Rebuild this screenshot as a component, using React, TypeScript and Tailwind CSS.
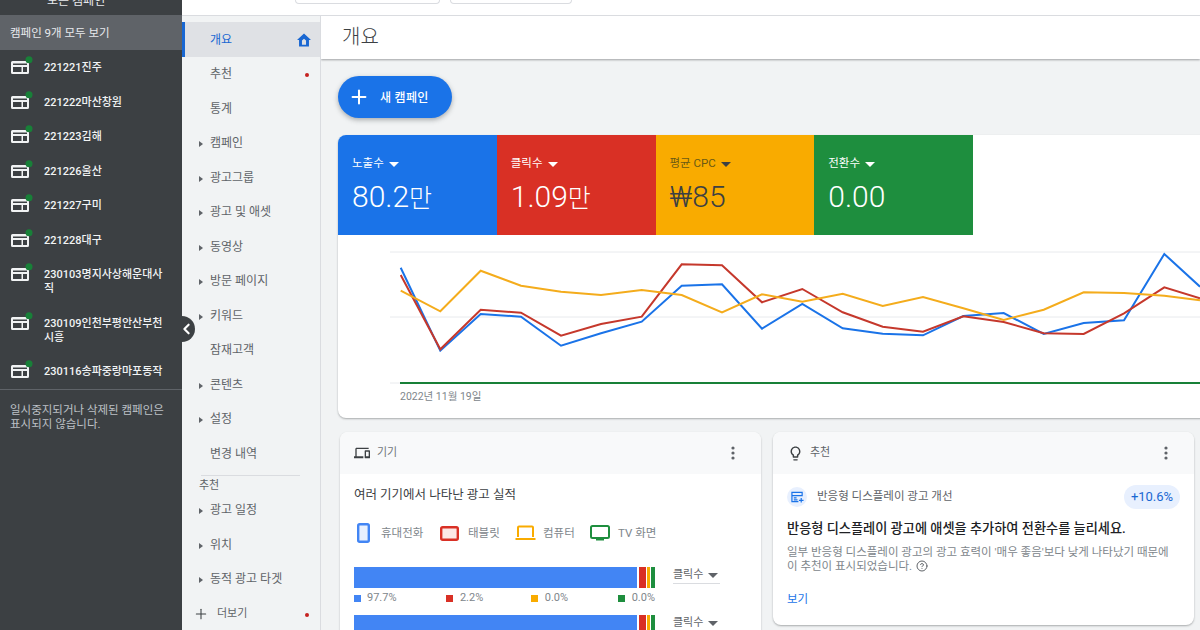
import { ChevronLeft, CircleHelp, Plus } from "lucide-react";

const campaigns = [
    "221221진주",
    "221222마산창원",
    "221223김해",
    "221226울산",
    "221227구미",
    "221228대구",
    "230103명지사상해운대사직",
    "230109인천부평안산부천시흥",
    "230116송파중랑마포동작",
];

const navTop = [
    { label: "추천", dot: true },
    { label: "통계" },
    { label: "캠페인", arrow: true },
    { label: "광고그룹", arrow: true },
    { label: "광고 및 애셋", arrow: true },
    { label: "동영상", arrow: true },
    { label: "방문 페이지", arrow: true },
    { label: "키워드", arrow: true },
    { label: "잠재고객" },
    { label: "콘텐츠", arrow: true },
    { label: "설정", arrow: true },
    { label: "변경 내역" },
];

const navBottom = [
    { label: "광고 일정", arrow: true },
    { label: "위치", arrow: true },
    { label: "동적 광고 타겟", arrow: true },
];

const blueLine = "400.7,267.7 440.3,350.7 480.7,314 521,316.7 561,345.7 601,333.3 641.7,321.7 681.7,285.7 722,284.3 762,328.7 802.3,304 842.7,328.3 882.7,333.7 923,335.3 963.3,316 1003.7,313 1043.7,334 1083.7,323 1124,320.3 1164.3,254 1200,286.7";
const redLine = "400.7,275 440.3,349.3 480.7,309.7 521,312.7 561,335.7 601,324 641.7,316.7 681.7,264.3 722,265.3 762,302.3 802.3,289 842.7,312.3 882.7,326.7 923,331.7 963.3,316.3 1003.7,322 1043.7,333.3 1083.7,334 1124,313.3 1164.3,287.3 1200,298.3";
const yellowLine = "400.7,290.7 440.3,311.3 480.7,270.7 521,285.7 561,291.7 601,295 641.7,290 681.7,295 722,312.3 762,294.3 802.3,301.7 842.7,293.7 882.7,306 923,297 963.3,308.3 1003.7,320 1043.7,309.7 1083.7,292.3 1124,293 1164.3,295.7 1200,300.3";

/* ----------------------------- icons ----------------------------- */
function CampaignIcon() {
    return (
        <svg width="24" height="20" viewBox="0 0 24 20" className="shrink-0">
            <path fill="#f1f3f4" fillRule="evenodd" d="M2.500 5h15A1.500 1.500 0 0 1 19 6.500v10a1.500 1.500 0 0 1-1.500 1.500h-15A1.500 1.500 0 0 1 1 16.500v-10A1.500 1.500 0 0 1 2.500 5zM3 7.500v1.500h14V7.500zm0 3.500v5h8.500v-5zm10 0v5h4v-5z" />
            <circle cx="19" cy="3.800" r="3.500" fill="#188038" />
        </svg>
    );
}

function Dots() {
    return (
        <svg width="4" height="14" viewBox="0 0 4 14">
            <circle cx="2" cy="2" r="1.600" fill="#5f6368" />
            <circle cx="2" cy="7" r="1.600" fill="#5f6368" />
            <circle cx="2" cy="12" r="1.600" fill="#5f6368" />
        </svg>
    );
}

function Caret({ color }: { color: string }) {
    return (
        <svg width="10" height="5" viewBox="0 0 10 5" className="ml-[5px]">
            <path d="M0 0h10L5 5z" fill={color} />
        </svg>
    );
}

function NavItem({ label, arrow, dot }: { label: string; arrow?: boolean; dot?: boolean }) {
    return (
        <div className="h-[34.5px] flex items-center relative pl-[28px] text-[12px] text-[#5f6368]">
            {arrow && (
                <svg width="4" height="6" viewBox="0 0 4 6" className="absolute left-[17px] top-[15px]">
                    <path d="M0 0l4 3-4 3z" fill="#5f6368" />
                </svg>
            )}
            {label}
            {dot && <span className="absolute left-[123px] top-[16px] w-1 h-1 rounded-full bg-[#c5221f]" />}
        </div>
    );
}

function Kpi({ label, value, unit, bg, dark }: { label: string; value: string; unit?: string; bg: string; dark?: boolean }) {
    return (
        <div className={`w-[158.75px] h-[100px] pl-[14px] pt-[22px] ${bg} ${dark ? "text-[#6b5a14]" : "text-white"}`}>
            <div className="flex items-center text-[11.5px] h-[14px]">
                {label}
                <Caret color={dark ? "#3c4043" : "#ffffff"} />
            </div>
            <div className={`mt-[10px] text-[30px] leading-[32px] font-light ${dark ? "text-[#3c4043]" : "text-white"}`}>
                {value}
                {unit && <span className="text-[25px]">{unit}</span>}
            </div>
        </div>
    );
}

function Square({ color }: { color: string }) {
    return <span className={`w-[7px] h-[7px] ${color}`} />;
}

function BarRow({ showLabels }: { showLabels?: boolean }) {
    return (
        <div className="flex">
            <div className="w-[301px]">
                <div className="h-[21px] flex">
                    <div className="w-[283px] bg-[#4285f4]" />
                    <div className="w-[1.5px] bg-white" />
                    <div className="w-[7.5px] bg-[#d93025]" />
                    <div className="w-[1px] bg-white" />
                    <div className="w-[3px] bg-[#f9ab00]" />
                    <div className="w-[1px] bg-white" />
                    <div className="w-[4px] bg-[#1e8e3e]" />
                </div>
                {showLabels && (
                    <div className="flex h-[20px] items-center text-[11px] text-[#80868b]">
                        <div className="w-[92px] flex items-center gap-[6px]"><Square color="bg-[#4285f4]" />97.7%</div>
                        <div className="w-[85px] flex items-center gap-[7px]"><Square color="bg-[#d93025]" />2.2%</div>
                        <div className="w-[87px] flex items-center gap-[7px]"><Square color="bg-[#f9ab00]" />0.0%</div>
                        <div className="flex items-center gap-[7px]"><Square color="bg-[#1e8e3e]" />0.0%</div>
                    </div>
                )}
            </div>
            <div className="ml-[18px] w-[47px] h-[16px] mt-[1px] flex items-center border-b border-[#dadce0] text-[11px] text-[#5f6368]">
                클릭수
                <Caret color="#5f6368" />
            </div>
        </div>
    );
}

/* --------------------------- component --------------------------- */
export default function App() {
    return (
        <div className="relative w-[1200px] h-[630px] overflow-hidden flex bg-[#f1f3f4] font-['Roboto','Noto_Sans_CJK_KR',sans-serif]">
            {/* CAMPAIGN LIST */}
            <aside className="w-[182px] shrink-0 bg-[#3c4043] text-white">
                <div className="h-[15px] overflow-hidden pl-[47px] text-[12px] leading-[3px] text-[#e8eaed]">모든 캠페인</div>
                <div className="h-[35px] flex items-center pl-[10px] pt-[2px] bg-[#5f6368] text-[11.5px] text-[#e8eaed]">캠페인 9개 모두 보기</div>
                {campaigns.map((name) => (
                    <div key={name} className="flex items-start pl-[10px] pr-[10px] pt-[11.25px] pb-[9.25px]">
                        <div className="w-[34px] h-[14px] shrink-0 -mt-[5px]"><CampaignIcon /></div>
                        <div className="text-[11px] leading-[14px] font-medium break-all text-[#f1f3f4]">{name}</div>
                    </div>
                ))}
                <div className="border-t border-[#5f6368] px-[10px] pt-[13px] text-[11.5px] leading-[14px] break-keep text-[#bdc1c6]">
                    일시중지되거나 삭제된 캠페인은 표시되지 않습니다.
                </div>
            </aside>

            {/* COLLAPSE HANDLE */}
            <div className="absolute left-[182px] top-[316px] w-[13px] h-[26px] rounded-r-full bg-[#3c4043] flex items-center">
                <ChevronLeft size={18} color="#ffffff" strokeWidth={3} className="-ml-[4px]" />
            </div>

            <div className="flex-1 min-w-0 flex flex-col">
                {/* TOP BAR */}
                <div className="h-[16px] shrink-0 bg-white border-b border-[#dadce0] flex items-start pl-[113px] gap-[10px]">
                    <div className="w-[145px] h-[4px] border border-t-0 border-[#dadce0] rounded-b-xl" />
                    <div className="w-[122px] h-[4px] border border-t-0 border-[#dadce0] rounded-b-xl" />
                </div>

                <div className="flex-1 min-h-0 flex">
                    {/* NAV */}
                    <nav className="w-[139px] shrink-0 border-r border-[#dadce0] pt-[6px]">
                        <div className="h-[35px] flex items-center relative pl-[25px] border-l-[3px] border-[#1967d2] bg-[#dfe1e5] text-[12px] text-[#1967d2]">
                            개요
                            <svg width="14" height="14" viewBox="0 0 24 24" className="absolute left-[112px] top-[11px]">
                                <path fill="#1967d2" fillRule="evenodd" d="M12 1L0 12h3.500v11h17V12H24zM8.500 20v-7L12 10l3.500 3v7z" />
                            </svg>
                        </div>
                        {navTop.map((item) => (
                            <NavItem key={item.label} {...item} />
                        ))}
                        <div className="ml-[19px] w-[99px] mt-[4px] border-t border-[#dadce0]" />
                        <div className="h-[17px] pl-[17px] pt-[3px] flex items-center text-[11px] text-[#5f6368]">추천</div>
                        {navBottom.map((item) => (
                            <NavItem key={item.label} {...item} />
                        ))}
                        <div className="h-[34.5px] flex items-center relative pl-[11px] text-[11px] text-[#5f6368]">
                            <Plus size={16} color="#3c4043" strokeWidth={1.6} className="mr-[8px]" />
                            더보기
                            <span className="absolute left-[123px] top-[16px] w-1 h-1 rounded-full bg-[#c5221f]" />
                        </div>
                    </nav>

                    {/* MAIN */}
                    <main className="flex-1 min-w-0 overflow-hidden">
                        <div className="h-[43px] bg-white shadow-[0_1px_2px_rgba(60,64,67,0.45)] flex items-center pl-[21px] pb-[2px] text-[20px] text-[#3c4043] font-light">
                            개요
                        </div>

                        <button className="mt-[17px] ml-[17px] w-[114px] h-[42px] rounded-full bg-[#1a73e8] shadow-[0_2px_5px_rgba(60,64,67,0.4)] flex items-center pl-[10px] text-[12px] font-medium tracking-[0.3px] text-white">
                            <Plus size={22} color="#ffffff" strokeWidth={2.2} />
                            <span className="ml-[10px] pt-[2px]">새 캠페인</span>
                        </button>

                        <section className="mt-[17px] ml-[17px] w-[890px] h-[283px] bg-white rounded-l-lg overflow-hidden shadow-[0_1px_2px_rgba(60,64,67,0.4)]">
                            <div className="flex">
                                <Kpi label="노출수" value="80.2" unit="만" bg="bg-[#1a73e8]" />
                                <Kpi label="클릭수" value="1.09" unit="만" bg="bg-[#d93025]" />
                                <Kpi label="평균 CPC" value="₩85" bg="bg-[#f9ab00]" dark />
                                <Kpi label="전환수" value="0.00" bg="bg-[#1e8e3e]" />
                            </div>
                            <svg width="862" height="150" viewBox="338 235 862 150" className="block" fill="none">
                                <path d="M390 252H1200M390 317H1200M390 383H1200" stroke="#e8eaed" strokeWidth="1" />
                                <polyline points={blueLine} stroke="#1a73e8" strokeWidth="2" />
                                <polyline points={redLine} stroke="#c5382c" strokeWidth="2" />
                                <polyline points={yellowLine} stroke="#f4ac1c" strokeWidth="2" />
                                <path d="M400 383H1200" stroke="#188038" strokeWidth="2" />
                            </svg>
                            <div className="pl-[62px] pt-[5px] text-[10.5px] leading-[14px] text-[#80868b]">2022년 11월 19일</div>
                        </section>

                        <div className="mt-[14px] ml-[19px] flex gap-[12px] items-start">
                            {/* DEVICES */}
                            <section className="w-[421px] h-[240px] shrink-0 bg-white rounded-lg overflow-hidden shadow-[0_1px_2px_rgba(60,64,67,0.35)]">
                                <div className="h-[42px] bg-[#f8f9fa] flex items-center pl-[14px] pr-[26px] text-[11px] text-[#70757a]">
                                    <svg width="16" height="16" viewBox="0 0 24 24" fill="#3c4043" className="mr-[7px]">
                                        <path d="M4 6h18V4H4c-1.100 0-2 .9-2 2v11H0v3h14v-3H4V6zm19 2h-6c-.55 0-1 .45-1 1v10c0 .55.45 1 1 1h6c.55 0 1-.45 1-1V9c0-.55-.45-1-1-1zm-1 9h-4v-7h4v7z" />
                                    </svg>
                                    기기
                                    <span className="ml-auto flex"><Dots /></span>
                                </div>
                                <div className="pl-[14px]">
                                    <div className="pt-[13px] text-[12.5px] leading-[16px] text-[#3c4043]">여러 기기에서 나타난 광고 실적</div>
                                    <div className="mt-[20px] h-[20px] flex items-center text-[11.5px] text-[#80868b]">
                                        <svg width="13" height="20" viewBox="0 0 13 20" fill="none" className="ml-[3px] mr-[11px]">
                                            <rect x="1.200" y="1.200" width="10.600" height="17.600" rx="1.500" fill="#e8f0fe" stroke="#4285f4" strokeWidth="2.400" />
                                        </svg>
                                        <span className="w-[59px] pt-[2px]">휴대전화</span>
                                        <svg width="19" height="15" viewBox="0 0 19 15" fill="none" className="mr-[9px]">
                                            <rect x="1.200" y="1.200" width="16.600" height="12.600" rx="1.500" fill="#fce8e6" stroke="#d93025" strokeWidth="2.400" />
                                        </svg>
                                        <span className="w-[47px] pt-[2px]">태블릿</span>
                                        <svg width="21" height="16" viewBox="0 0 21 16" fill="none" className="mr-[7px]">
                                            <path d="M3 12V2.500A1 1 0 0 1 4 1.500h13a1 1 0 0 1 1 1V12M0.500 14h20" stroke="#f9ab00" strokeWidth="2" />
                                        </svg>
                                        <span className="w-[47px] pt-[2px]">컴퓨터</span>
                                        <svg width="20" height="16" viewBox="0 0 20 16" fill="none" className="mr-[8px]">
                                            <rect x="1" y="1" width="18" height="12" rx="1.500" stroke="#1e8e3e" strokeWidth="2" />
                                            <path d="M6 14.500h8" stroke="#1e8e3e" strokeWidth="2" />
                                        </svg>
                                        <span className="pt-[2px]">TV 화면</span>
                                    </div>
                                    <div className="mt-[24px]"><BarRow showLabels /></div>
                                    <div className="mt-[7px]"><BarRow /></div>
                                </div>
                            </section>

                            {/* RECOMMENDATIONS */}
                            <section className="w-[421px] h-[193px] shrink-0 bg-white rounded-lg overflow-hidden shadow-[0_1px_2px_rgba(60,64,67,0.4)]">
                                <div className="h-[42px] bg-[#f8f9fa] flex items-center pl-[14px] pr-[26px] text-[11px] text-[#5f6368]">
                                    <svg width="17" height="17" viewBox="0 0 24 24" fill="#3c4043" className="mr-[6px]">
                                        <path d="M9 21c0 .55.45 1 1 1h4c.55 0 1-.45 1-1v-1H9v1zm3-19C8.140 2 5 5.140 5 9c0 2.380 1.190 4.470 3 5.740V17c0 .55.45 1 1 1h6c.55 0 1-.45 1-1v-2.260c1.810-1.270 3-3.360 3-5.740 0-3.860-3.140-7-7-7zm2.850 11.100l-.85.6V16h-4v-2.300l-.85-.6A4.997 4.997 0 0 1 7 9c0-2.760 2.240-5 5-5s5 2.240 5 5c0 1.630-.8 3.160-2.150 4.100z" />
                                    </svg>
                                    추천
                                    <span className="ml-auto flex"><Dots /></span>
                                </div>
                                <div className="px-[14px]">
                                    <div className="mt-[11px] h-[24px] flex items-center text-[11.5px] text-[#5f6368]">
                                        <span className="w-[20px] h-[20px] rounded-full bg-[#e8f0fe] flex items-center justify-center mr-[10px]">
                                            <svg width="13" height="13" viewBox="0 0 14 14" fill="none">
                                                <path d="M1 1.500h11v3.500H1zM1 1.500v10h7M3 7.500h3M3 9.500h4" stroke="#1a73e8" strokeWidth="1.300" />
                                                <path d="M11 7.500v5M8.500 10h5" stroke="#1a73e8" strokeWidth="1.300" />
                                            </svg>
                                        </span>
                                        반응형 디스플레이 광고 개선
                                        <span className="ml-auto w-[56px] h-[24px] rounded-full bg-[#e8f0fe] flex items-center justify-center text-[13px] text-[#1967d2]">+10.6%</span>
                                    </div>
                                    <div className="mt-[11px] text-[13.2px] leading-[18px] font-medium text-[#202124]">반응형 디스플레이 광고에 애셋을 추가하여 전환수를 늘리세요.</div>
                                    <div className="mt-[7px] pr-[6px] text-[11.5px] leading-[14px] text-[#80868b]">
                                        일부 반응형 디스플레이 광고의 광고 효력이 '매우 좋음'보다 낮게 나타났기 때문에 이 추천이 표시되었습니다.
                                        <CircleHelp size={12} color="#5f6368" className="inline ml-[4px] -mt-[2px]" />
                                    </div>
                                    <div className="mt-[19px] text-[11.5px] leading-[14px] text-[#1a73e8]">보기</div>
                                </div>
                            </section>
                        </div>
                    </main>
                </div>
            </div>
        </div>
    );
}
